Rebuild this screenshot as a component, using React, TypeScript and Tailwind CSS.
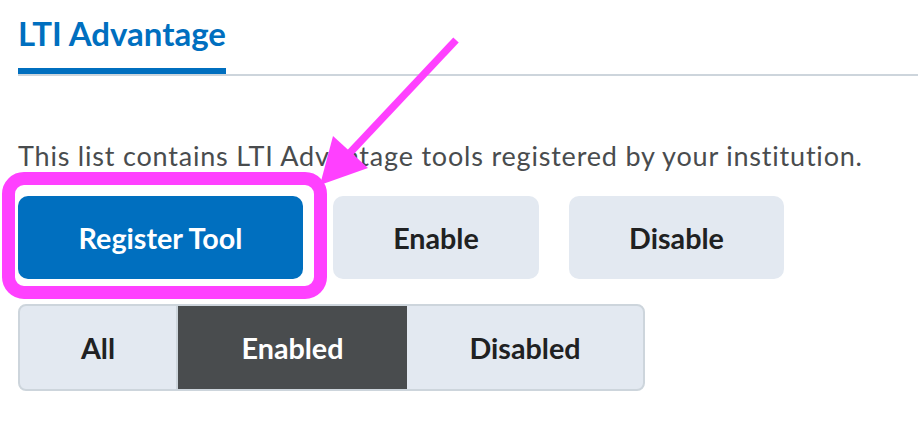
import React from "react";

export default function App() {
  return (
    <div className="relative w-[918px] h-[440px] bg-white overflow-hidden font-['Lato','Noto_Sans',sans-serif]">
      <div className="pl-[18px] pt-[13px]">
        <div className="flex flex-col">
          <div className="w-[208px] text-[33px] leading-[40px] font-bold text-[#006fbf] whitespace-nowrap">
            LTI Advantage
          </div>
          <div className="w-[208px] h-[6px] mt-[15px] bg-[#006fbf]" />
          <div className="h-[2px] bg-[#cdd5dc]" />
        </div>

        <p className="mt-[64px] text-[27px] leading-[32px] tracking-[0.8px] text-[#494c4e] whitespace-nowrap">
          This list contains LTI Advantage tools registered by your institution.
        </p>

        <div className="mt-[24px] flex gap-[30px]">
          <button className="w-[285px] h-[83px] pt-[2px] rounded-[10px] bg-[#006fbf] text-white text-[28.7px] font-bold">
            Register Tool
          </button>
          <button className="w-[206px] h-[83px] pt-[2px] rounded-[10px] bg-[#e3e9f1] text-[#202122] text-[28.7px] font-bold">
            Enable
          </button>
          <button className="w-[215px] h-[83px] pt-[2px] rounded-[10px] bg-[#e3e9f1] text-[#202122] text-[28.7px] font-bold">
            Disable
          </button>
        </div>

        <div className="mt-[25px] flex w-[627px] h-[87px] rounded-[8px] border-2 border-[#cdd5dc] bg-[#e3e9f1] overflow-hidden">
          <div className="w-[158px] pt-[2px] flex items-center justify-center text-[28.7px] font-bold text-[#202122] border-r-2 border-[#cdd5dc]">
            All
          </div>
          <div className="w-[229px] -my-[2px] pt-[2px] flex items-center justify-center text-[28.7px] font-bold text-white bg-[#494c4e]">
            Enabled
          </div>
          <div className="flex-1 pt-[2px] flex items-center justify-center text-[28.7px] font-bold text-[#202122]">
            Disabled
          </div>
        </div>
      </div>

      {/* magenta highlight frame */}
      <div className="absolute left-[2px] top-[172px] w-[325px] h-[127px] rounded-[22px] border-[13px] border-[#ff40ff]" />

      {/* arrow */}
      <svg className="absolute left-0 top-0" width="918" height="440" viewBox="0 0 918 440">
        <line x1="456" y1="40" x2="345" y2="158" stroke="#ff40ff" strokeWidth="7.5" />
        <polygon points="333,136 368,168 320,185" fill="#ff40ff" />
      </svg>
    </div>
  );
}
